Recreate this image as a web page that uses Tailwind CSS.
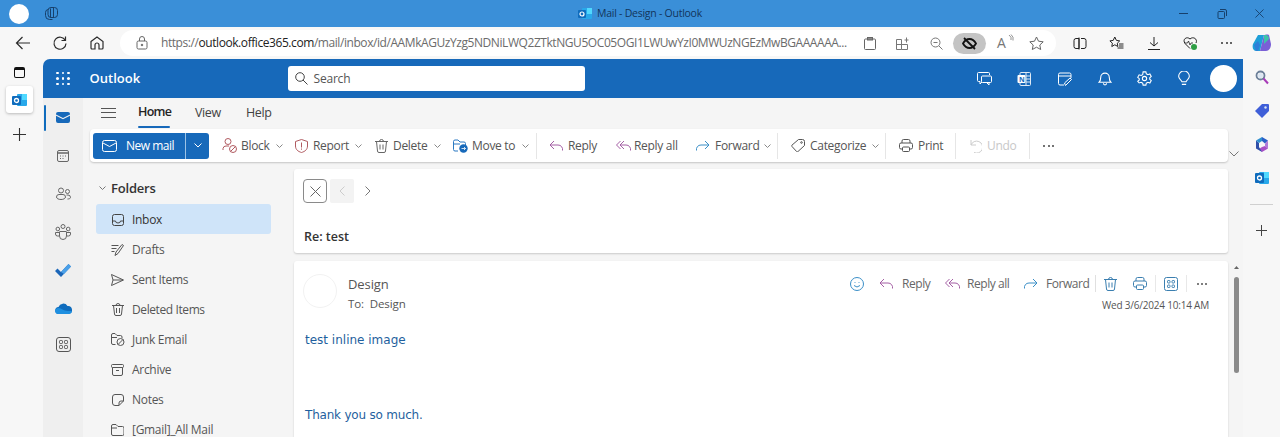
<!DOCTYPE html>
<html lang="en">
<head>
<meta charset="UTF-8">
<title>Mail - Design - Outlook</title>
<script src="https://cdn.jsdelivr.net/npm/@tailwindcss/browser@4"></script>
</head>
<body class="w-[1280px] h-[437px] overflow-hidden bg-[#f7f7f7] font-['Open_Sans','Noto_Sans',sans-serif] text-[#424242]">

<!-- title bar -->
<div class="h-[27px] bg-[#3a8fd8] flex items-center">
  <div class="w-5 h-5 rounded-full bg-white ml-[9px]"></div>
  <svg class="w-4 h-4 ml-[14px]" viewBox="0 0 16 16" fill="none" stroke="#17406b" stroke-width="1"><rect x="5" y="1.500" width="9.500" height="10" rx="3"/><path d="M5 3.500A3 3 0 0 0 2.500 6.500v3A4 4 0 0 0 6.500 13.500h3"/><path d="M7.500 2.500v9M10.500 2v10"/></svg>
  <div class="flex-1 flex items-center text-[10.500px] tracking-[-0.25px] text-[#12355c] gap-[5px] ml-[519px]">
    <svg class="w-[14px] h-[13px]" viewBox="0 0 14 13"><rect x="4" y="1" width="10" height="11" rx="1" fill="#28a8ea"/><rect x="9" y="1" width="5" height="6" fill="#50d9ff"/><rect x="0" y="3" width="8" height="8" rx="1" fill="#0f6cbd"/><circle cx="4" cy="7" r="2" fill="none" stroke="#fff" stroke-width="1.200"/></svg>
    <span>Mail - Design - Outlook</span>
  </div>
  <div class="flex items-center pr-[16px]">
    <div class="w-[9px] h-px bg-[#17406b]"></div>
    <svg class="w-[10px] h-[10px] ml-[29px]" viewBox="0 0 10 10" fill="none" stroke="#17406b"><rect x="1" y="2.500" width="6.500" height="7" rx="1"/><path d="M3 .5h5a1.500 1.500 0 0 1 1.500 1.500v5"/></svg>
    <svg class="w-[9px] h-[9px] ml-[28px]" viewBox="0 0 10 10" stroke="#17406b" stroke-width="1"><path d="M.5.500l9 9M9.500.5l-9 9"/></svg>
  </div>
</div>

<!-- browser toolbar -->
<div class="h-[32px] bg-[#f7f7f7] flex items-center">
  <svg class="w-4 h-4 ml-[15px]" viewBox="0 0 16 16" fill="none" stroke="#2b2b2b" stroke-width="1.200"><path d="M15 8H1.500M7.500 2 1.500 8l6 6"/></svg>
  <svg class="w-4 h-4 ml-[21px]" viewBox="0 0 16 16" fill="none" stroke="#2b2b2b" stroke-width="1.200"><path d="M13.500 1.500v4h-4M13.300 5.400A6 6 0 1 0 14 8.500"/></svg>
  <svg class="w-4 h-4 ml-[21px]" viewBox="0 0 16 16" fill="none" stroke="#2b2b2b" stroke-width="1.200"><path d="M2 6.500 8 2l6 4.500V13a1 1 0 0 1-1 1h-3V10a2 2 0 0 0-4 0v4H3a1 1 0 0 1-1-1z"/></svg>
  <div class="ml-[15px] w-[936px] h-[26px] rounded-full bg-white flex items-center">
    <svg class="w-[12px] h-[14px] ml-[16px]" viewBox="0 0 12 14" fill="none" stroke="#666" stroke-width="1"><rect x="1" y="5" width="10" height="8" rx="1.500"/><path d="M3.500 5V3a2.500 2.500 0 0 1 5 0v2"/><circle cx="6" cy="9" r=".8" fill="#666"/></svg>
    <div class="ml-[13px] w-[690px] text-[12px] leading-[16px] whitespace-nowrap text-[#6b6b6b] tracking-[-0.43px]">https://<span class="text-[#222]">outlook.office365.com</span>/mail/inbox/id/AAMkAGUzYzg5NDNiLWQ2ZTktNGU5OC05OGI1LWUwYzI0MWUzNGEzMwBGAAAAAA...</div>
    <svg class="w-[12px] h-[13px] ml-[13px]" viewBox="0 0 12 13" fill="none" stroke="#666"><rect x=".5" y="2" width="11" height="10.500" rx="1"/><rect x="3.500" y=".5" width="5" height="2.500" fill="#888"/></svg>
    <svg class="w-[13px] h-[13px] ml-[20px]" viewBox="0 0 13 13" fill="none" stroke="#777"><path d="M.5 2.500h5v10h-5zM.5 7.500h11v5h-6M8.500 3h4M10.500 .5v5"/></svg>
    <svg class="w-[13px] h-[13px] ml-[21px]" viewBox="0 0 13 13" fill="none" stroke="#777"><circle cx="5.500" cy="5.500" r="4.500"/><path d="M9 9l3.500 3.500M3.500 5.500h4"/></svg>
    <div class="ml-[10px] w-[33px] h-[21px] rounded-full bg-[#c4c4c4] flex items-center justify-center">
      <svg class="w-[15px] h-[13px]" viewBox="0 0 15 13" fill="none" stroke="#111" stroke-width="1.800"><path d="M1 6.500C3 3 5 2 7.500 2s4.500 1 6.500 4.500C12 10 10 11 7.500 11S3 10 1 6.500z"/><path d="M2 1l11 11"/></svg>
    </div>
    <div class="ml-[11px] text-[14px] leading-none text-[#777] w-[18px] relative">A<svg class="w-[6px] h-[8px] absolute left-[11px] top-[-2px]" viewBox="0 0 6 8" fill="none" stroke="#777" stroke-width=".8"><path d="M1 1q3 2 2 5M3 .5q3 2.500 2 6"/></svg></div>
    <svg class="w-[15px] h-[14px] ml-[14px]" viewBox="0 0 15 14" fill="none" stroke="#666"><path d="M7.500 1l2 4.200 4.700.6-3.400 3.200.9 4.500-4.200-2.300-4.200 2.300.9-4.500L.8 5.800l4.700-.6z"/></svg>
  </div>
  <svg class="w-[14px] h-[13px] ml-[17px]" viewBox="0 0 14 13" fill="none" stroke="#222"><path d="M6 1.500H3a2 2 0 0 0-2 2v6a2 2 0 0 0 2 2h3zM6 .5v12M8 1.500h3a2 2 0 0 1 2 2v6a2 2 0 0 1-2 2H8"/></svg>
  <svg class="w-[15px] h-[14px] ml-[22px]" viewBox="0 0 15 14" fill="none" stroke="#222"><path d="M5.800 1l1.600 3.400 3.300.5-2.400 2.300.6 3.300-3.100-1.700-3 1.700.6-3.300L.9 4.900l3.300-.5zM10 8h4.500M10 10h4.500M8.500 12h6"/></svg>
  <svg class="w-[12px] h-[14px] ml-[24px]" viewBox="0 0 12 14" fill="none" stroke="#222"><path d="M6 1v9M2 6.500 6 10l4-3.500M0 13.500h12"/></svg>
  <svg class="w-[15px] h-[15px] ml-[23px]" viewBox="0 0 15 15" fill="none"><path d="M7 12.500 2 7.500C-1 3 4 0 7 3c3-3 8 0 6 4" stroke="#222"/><path d="M2 7h2.500l1-2 1.500 4 1-2h2" stroke="#222" stroke-width=".8"/><circle cx="11" cy="11" r="3" fill="#2e9e44"/></svg>
  <div class="flex gap-[2.500px] ml-[23px]"><i class="w-[2px] h-[2px] rounded-full bg-[#333]"></i><i class="w-[2px] h-[2px] rounded-full bg-[#333]"></i><i class="w-[2px] h-[2px] rounded-full bg-[#333]"></i></div>
  <svg class="w-5 h-5 ml-[20px]" viewBox="0 0 20 20"><path d="M6 2h6L8 18H4C1 18 0 14 1 11z" fill="#1e9fd8"/><path d="M8 18h6c3 0 5-3 5-7l-2-9c-2-1-4 0-5 0z" fill="#7a5fd6"/><path d="M12 2h2c2 0 3 2 3 4l-5 5z" fill="#3ec3a8"/><path d="M2 12l4-4 2 4-2 6H4z" fill="#2e7fd8"/></svg>
</div>

<div class="flex h-[378px]">
  <!-- edge vertical tabs -->
  <div class="w-[43px] shrink-0 flex flex-col items-center">
    <div class="mt-[8px] w-[11px] h-[11px] rounded-[2px] border-[1.500px] border-[#111] border-t-[3px] ml-[-4px]"></div>
    <div class="mt-[8px] w-[27px] h-[27px] ml-[-4px] rounded-[3px] bg-white shadow-[0_1px_3px_rgba(0,0,0,0.25)] flex items-center justify-center">
      <svg class="w-[15px] h-[14px]" viewBox="0 0 15 14"><rect x="5" y="1" width="10" height="12" rx="1" fill="#28a8ea"/><rect x="10" y="1" width="5" height="6" fill="#50d9ff"/><rect x="0" y="3" width="9" height="9" rx="1" fill="#0f6cbd"/><circle cx="4.500" cy="7.500" r="2" fill="none" stroke="#fff" stroke-width="1.300"/></svg>
    </div>
    <svg class="w-[13px] h-[13px] mt-[15px] ml-[-4px]" viewBox="0 0 13 13" stroke="#333" stroke-width="1.100"><path d="M6.500 0v13M0 6.500h13"/></svg>
  </div>

  <!-- outlook -->
  <div class="w-[1200px] shrink-0 bg-[#f5f5f5] flex flex-col overflow-hidden rounded-tl-[7px]">
    <div class="h-[39px] bg-[#1769ba] flex items-center shrink-0">
      <div class="grid grid-cols-3 gap-[3px] ml-[13px]">
        <i class="w-[2.500px] h-[2.500px] rounded-full bg-white"></i><i class="w-[2.500px] h-[2.500px] rounded-full bg-white"></i><i class="w-[2.500px] h-[2.500px] rounded-full bg-white"></i>
        <i class="w-[2.500px] h-[2.500px] rounded-full bg-white"></i><i class="w-[2.500px] h-[2.500px] rounded-full bg-white"></i><i class="w-[2.500px] h-[2.500px] rounded-full bg-white"></i>
        <i class="w-[2.500px] h-[2.500px] rounded-full bg-white"></i><i class="w-[2.500px] h-[2.500px] rounded-full bg-white"></i><i class="w-[2.500px] h-[2.500px] rounded-full bg-white"></i>
      </div>
      <div class="ml-[20px] w-[198px] text-white text-[13px] font-semibold pt-[1px]">Outlook</div>
      <div class="w-[297px] h-[25px] bg-white rounded-[3px] flex items-center text-[12px] tracking-[-0.2px] text-[#555]">
        <svg class="w-[13px] h-[13px] ml-[7px]" viewBox="0 0 13 13" fill="none" stroke="#444"><circle cx="5" cy="5" r="4.300"/><path d="M8 8l4.500 4.500"/></svg>
        <span class="ml-[6px]">Search</span>
      </div>
      <svg class="w-[15px] h-[14px] ml-[392px]" viewBox="0 0 15 14" fill="none" stroke="#fff"><path d="M12.500 3V1.500a1 1 0 0 0-1-1h-10a1 1 0 0 0-1 1v7a1 1 0 0 0 1 1H3V12l2-2"/><rect x="4.500" y="4" width="10" height="6.500" rx="1"/><path d="M12 10.500V13l-2.500-2.500"/></svg>
      <svg class="w-[14px] h-[14px] ml-[25px]" viewBox="0 0 14 14"><rect x="3" y=".5" width="10.500" height="13" rx="1" fill="none" stroke="#dfeaf5"/><path d="M9 .5v13M9 4h4.500M9 7h4.500M9 10h4.500" stroke="#dfeaf5"/><rect x=".5" y="3" width="8" height="8" rx="1" fill="#fff"/><text x="2" y="9.700" font-size="7" font-weight="700" fill="#1769ba">N</text></svg>
      <svg class="w-[14px] h-[14px] ml-[27px]" viewBox="0 0 14 14" fill="none" stroke="#fff"><path d="M6 13H2a1.500 1.500 0 0 1-1.500-1.500v-9A1.500 1.500 0 0 1 2 1h9.500A1.500 1.500 0 0 1 13 2.500V6M.5 4H13"/><path d="M6.500 11l1 2.500 6-6-1.500-1.500-5.500 5z"/></svg>
      <svg class="w-[14px] h-[15px] ml-[26px]" viewBox="0 0 13 14" fill="none" stroke="#fff"><path d="M1 10.500c1-1 1.500-2 1.500-4.500a4 4 0 0 1 8 0c0 2.500.5 3.500 1.500 4.500zM5 11.500a1.500 1.500 0 0 0 3 0"/></svg>
      <svg class="w-[15px] h-[15px] ml-[25px]" viewBox="0 0 14 14" fill="none" stroke="#fff"><path d="M5.700.8h2.600l.4 1.800 1.500.8 1.800-.6 1.300 2.300-1.400 1.300v1.200l1.400 1.300-1.300 2.300-1.800-.6-1.500.8-.4 1.800H5.700l-.4-1.800-1.500-.8-1.800.6L.7 9.700l1.400-1.300V7.200L.7 5.900 2 3.600l1.800.6 1.500-.8z"/><circle cx="7" cy="7" r="2"/></svg>
      <svg class="w-[12px] h-[15px] ml-[26px]" viewBox="0 0 11 14" fill="none" stroke="#fff"><path d="M3.500 10C3 8 .5 7.500.5 5a5 5 0 0 1 10 0C10.500 7.500 8 8 7.500 10zM3.500 12.500h4"/></svg>
      <div class="w-[27px] h-[27px] rounded-full bg-white ml-[20px]"></div>
    </div>

    <div class="flex flex-1 min-h-0">
      <!-- app rail -->
      <div class="w-[40px] shrink-0 bg-[#efefef] flex flex-col items-center relative">
        <div class="absolute left-[1px] top-[7px] h-[26px] w-[2px] bg-[#0f6cbd] rounded"></div>
        <svg class="w-[14px] h-[11px] mt-[14px]" viewBox="0 0 14 11"><path d="M0 2a2 2 0 0 1 2-2h10a2 2 0 0 1 2 2v.500L7 6 0 2.500z" fill="#1769ba"/><path d="M0 3.800 7 7.300l7-3.500V9a2 2 0 0 1-2 2H2a2 2 0 0 1-2-2z" fill="#1769ba"/></svg>
        <svg class="w-[12px] h-[12px] mt-[27px]" viewBox="0 0 12 12" fill="none" stroke="#666"><rect x=".5" y=".5" width="11" height="11" rx="1.500"/><path d="M.5 3h11" stroke-width="1.500"/><path d="M3 6h1M5.500 6h1M8 6h1M3 8.500h1M5.500 8.500h1" stroke-width="1"/></svg>
        <svg class="w-[15px] h-[13px] mt-[25px]" viewBox="0 0 15 13" fill="none" stroke="#666"><circle cx="5" cy="3.500" r="2.500"/><circle cx="11.500" cy="4.500" r="2"/><path d="M.5 10a2.500 2.500 0 0 1 2.500-2.500h4a2.500 2.500 0 0 1 2.500 2.500c0 1.500-2 2.500-4.500 2.500S.5 11.500.5 10zM10.500 8H12a2.500 2.500 0 0 1 2.500 2.500c0 1-1.500 1.500-3 1.500"/></svg>
        <svg class="w-[16px] h-[16px] mt-[24px]" viewBox="0 0 16 16" fill="none" stroke="#666"><circle cx="8" cy="2.500" r="2"/><circle cx="2.800" cy="5" r="1.800"/><circle cx="13.200" cy="5" r="1.800"/><path d="M5 7.500h6a.5.5 0 0 1 .5.5v4a3.500 3.500 0 0 1-7 0V8a.5.5 0 0 1 .5-.5zM4 12H2.500A2 2 0 0 1 .5 10V8.500h3.500M12 12h1.500a2 2 0 0 0 2-2V8.500H12"/></svg>
        <svg class="w-[16px] h-[13px] mt-[24px]" viewBox="0 0 16 13"><path d="M0 7l2.500-2.500L6 8l7.500-8L16 2.500 6 13z" fill="#1b66b8"/><path d="M6 8l7.500-8L16 2.500 9 10z" fill="#4aa0e8"/></svg>
        <svg class="w-[17px] h-[11px] mt-[26px]" viewBox="0 0 17 11"><path d="M4 11a3.500 3.500 0 0 1-.5-7A5 5 0 0 1 12.500 3 4 4 0 0 1 13.500 11z" fill="#0f6cbd"/><path d="M0 8a3.500 3.500 0 0 1 3.500-3c3 0 5 3 9 3H17a3.500 3.500 0 0 1-3.500 3H4A3.500 3.500 0 0 1 0 8z" fill="#1e8fe0"/></svg>
        <svg class="w-[15px] h-[15px] mt-[23px]" viewBox="0 0 15 15" fill="none" stroke="#555"><rect x=".5" y=".5" width="14" height="14" rx="2.500"/><rect x="3.500" y="3.500" width="3" height="3" rx=".8"/><rect x="8.500" y="3.500" width="3" height="3" rx=".8"/><rect x="3.500" y="8.500" width="3" height="3" rx=".8"/><rect x="8.500" y="8.500" width="3" height="3" rx=".8"/></svg>
      </div>

      <div class="flex-1 min-w-0 flex flex-col">
        <!-- tabs -->
        <div class="h-[31px] shrink-0 flex items-center text-[12.500px] tracking-[-0.4px] text-[#424242]">
          <div class="w-[15px] h-[10px] ml-[18px] border-y border-[#555] relative mb-[2px]"><div class="absolute top-[3.500px] left-0 w-full h-px bg-[#555]"></div></div>
          <div class="ml-[22px] w-[32px] h-[29px] flex items-center relative font-semibold text-[#242424] tracking-[-0.7px] mb-[2px]">Home<div class="absolute bottom-[-1px] left-0 w-full h-[2px] rounded bg-[#1769ba]"></div></div>
          <div class="ml-[25px] w-[25px]">View</div>
          <div class="ml-[26px]">Help</div>
        </div>

        <!-- ribbon -->
        <div class="ml-[7px] w-[1138px] h-[33px] shrink-0 bg-white rounded-[4px] shadow-[0_1px_2px_rgba(0,0,0,0.2)] flex items-center text-[12px] tracking-[-0.3px] text-[#555] whitespace-nowrap relative">
          <div class="ml-[3px] w-[116px] h-[26px] bg-[#1769ba] rounded-[3px] flex items-center text-white">
            <svg class="w-[15px] h-[12px] ml-[9px]" viewBox="0 0 15 12" fill="none" stroke="#fff"><rect x=".5" y=".5" width="14" height="11" rx="2"/><path d="M1 3l6.500 3.500L14 3"/></svg>
            <span class="ml-[9px] w-[58px] tracking-[-0.5px]">New mail</span>
            <div class="w-px h-[26px] bg-[#9cc3e6] ml-[1px]"></div>
            <svg class="w-[8px] h-[5px] ml-[8px]" viewBox="0 0 8 5" fill="none" stroke="#fff"><path d="M.5.500 4 4 7.500.5"/></svg>
          </div>
          <svg class="w-[15px] h-[15px] ml-[13px]" viewBox="0 0 15 15" fill="none" stroke="#b05a60"><circle cx="6" cy="3.500" r="3"/><path d="M1 12v-1.500A3 3 0 0 1 4 8h3"/><circle cx="11" cy="11" r="3.500"/><path d="M8.500 13.500l5-5"/></svg>
          <span class="ml-[4px] w-[27px]">Block</span>
          <svg class="w-[7px] h-[4px] ml-[8px]" viewBox="0 0 7 4" fill="none" stroke="#888"><path d="M.5.500 3.500 3.500 6.500.5"/></svg>
          <svg class="w-[13px] h-[14px] ml-[12px]" viewBox="0 0 13 14" fill="none" stroke="#b05a60"><path d="M6.500.5 12.500 2.500V7c0 3.500-2.500 5.500-6 6.500C3 12.500.5 10.500.5 7V2.500z"/><path d="M6.500 3.500v5M6.500 9.500v1.200"/></svg>
          <span class="ml-[5px] w-[35px]">Report</span>
          <svg class="w-[7px] h-[4px] ml-[7px]" viewBox="0 0 7 4" fill="none" stroke="#888"><path d="M.5.500 3.500 3.500 6.500.5"/></svg>
          <svg class="w-[13px] h-[14px] ml-[13px]" viewBox="0 0 13 14" fill="none" stroke="#666"><path d="M0 2.500h13M4.500 2.500a2 2 0 0 1 4 0M1.500 2.500l1 9.500a1.500 1.500 0 0 0 1.500 1.500h5a1.500 1.500 0 0 0 1.500-1.500l1-9.500M5 5.500v5M8 5.500v5"/></svg>
          <span class="ml-[5px] w-[34px]">Delete</span>
          <svg class="w-[7px] h-[4px] ml-[7px]" viewBox="0 0 7 4" fill="none" stroke="#888"><path d="M.5.500 3.500 3.500 6.500.5"/></svg>
          <svg class="w-[15px] h-[14px] ml-[12px]" viewBox="0 0 15 14"><path d="M5 12H2a1.500 1.500 0 0 1-1.500-1.500v-8A1.500 1.500 0 0 1 2 1h3l2 2h4a1.500 1.500 0 0 1 1.500 1.500V6M.5 5H7" fill="none" stroke="#2b79c2"/><circle cx="10.500" cy="9.500" r="4.200" fill="#1769ba"/><path d="M8.500 9.500h4M11 8l1.500 1.500L11 11" stroke="#fff" fill="none" stroke-width=".8"/></svg>
          <span class="ml-[4px] w-[43px]">Move to</span>
          <svg class="w-[7px] h-[4px] ml-[7px]" viewBox="0 0 7 4" fill="none" stroke="#888"><path d="M.5.500 3.500 3.500 6.500.5"/></svg>
          <div class="w-px h-[26px] bg-[#e6e6e6] ml-[7px]"></div>
          <svg class="w-[14px] h-[11px] ml-[12px]" viewBox="0 0 14 11" fill="none" stroke="#a45fa4"><path d="M5 1 1 5l4 4M1 5h8a4.500 4.500 0 0 1 4.500 5.500"/></svg>
          <span class="ml-[5px] w-[28px]">Reply</span>
          <svg class="w-[15px] h-[11px] ml-[20px]" viewBox="0 0 15 11" fill="none" stroke="#a45fa4"><path d="M4.500 1 .5 5l4 4M8 1 4 5l4 4M4 5h6a4.500 4.500 0 0 1 4.500 5.500"/></svg>
          <span class="ml-[3px] w-[43px]">Reply all</span>
          <svg class="w-[14px] h-[11px] ml-[19px]" viewBox="0 0 14 11" fill="none" stroke="#3b8fc7"><path d="M9 1l4 4-4 4M13 5H5A4.500 4.500 0 0 0 .5 10.500"/></svg>
          <span class="ml-[5px] w-[42px]">Forward</span>
          <svg class="w-[7px] h-[4px] ml-[7px]" viewBox="0 0 7 4" fill="none" stroke="#888"><path d="M.5.500 3.500 3.500 6.500.5"/></svg>
          <div class="w-px h-[26px] bg-[#e6e6e6] ml-[6px]"></div>
          <svg class="w-[14px] h-[13px] ml-[13px]" viewBox="0 0 14 13" fill="none" stroke="#555"><path d="M7.500.5h4a2 2 0 0 1 2 2v4L7 12.500a1 1 0 0 1-1.400 0L1 7.500a1 1 0 0 1 0-1.400z"/><circle cx="10.500" cy="3.500" r=".8"/></svg>
          <span class="ml-[5px] w-[55px]">Categorize</span>
          <svg class="w-[7px] h-[4px] ml-[7px]" viewBox="0 0 7 4" fill="none" stroke="#888"><path d="M.5.500 3.500 3.500 6.500.5"/></svg>
          <div class="w-px h-[26px] bg-[#e6e6e6] ml-[6px]"></div>
          <svg class="w-[14px] h-[13px] ml-[13px]" viewBox="0 0 14 13" fill="none" stroke="#555"><path d="M3 4V2a1.500 1.500 0 0 1 1.500-1.500h5A1.500 1.500 0 0 1 11 2v2M3 10H2a1.500 1.500 0 0 1-1.500-1.500V5.500A1.500 1.500 0 0 1 2 4h10a1.500 1.500 0 0 1 1.500 1.500v3A1.500 1.500 0 0 1 12 10h-1"/><rect x="3.500" y="8" width="7" height="4.500" rx="1"/></svg>
          <span class="ml-[5px] w-[24px]">Print</span>
          <div class="w-px h-[26px] bg-[#e6e6e6] ml-[13px]"></div>
          <svg class="w-[12px] h-[14px] ml-[14px]" viewBox="0 0 12 14" fill="none" stroke="#ccc"><path d="M1 1v5h5M1 6a6 6 0 1 1 3 7.500"/></svg>
          <span class="ml-[5px] w-[28px] text-[#c8c8c8]">Undo</span>
          <div class="w-px h-[26px] bg-[#e6e6e6] ml-[14px]"></div>
          <div class="flex gap-[2.500px] ml-[13px]"><i class="w-[2px] h-[2px] rounded-full bg-[#444]"></i><i class="w-[2px] h-[2px] rounded-full bg-[#444]"></i><i class="w-[2px] h-[2px] rounded-full bg-[#444]"></i></div>
          <svg class="absolute left-[1139px] top-[22px] w-[10px] h-[6px]" viewBox="0 0 10 6" fill="none" stroke="#777"><path d="M.5.500 5 5 9.500.5"/></svg>
        </div>

        <div class="flex flex-1 min-h-0">
          <!-- folders -->
          <div class="w-[211px] shrink-0 text-[12px] tracking-[-0.3px] leading-[16px] text-[#555] whitespace-nowrap overflow-hidden">
            <div class="h-[42px] flex items-center pt-[10px]">
              <svg class="w-[7px] h-[4px] ml-[16px]" viewBox="0 0 7 4" fill="none" stroke="#777"><path d="M.5.500 3.500 3.500 6.500.5"/></svg>
              <span class="ml-[5px] text-[13px] font-semibold text-[#333] tracking-[-0.2px]">Folders</span>
            </div>
            <div class="ml-[13px] w-[175px] h-[30px] rounded-[3px] bg-[#cfe4f9] flex items-center text-[#333] font-medium pt-[1px]">
              <svg class="w-3 h-3 ml-[16px]" viewBox="0 0 12 12" fill="none" stroke="#444"><rect x=".5" y=".5" width="11" height="11" rx="2"/><path d="M.5 7H3.500a2.500 2 0 0 0 5 0h3"/></svg>
              <span class="ml-[8px]">Inbox</span>
            </div>
            <div class="ml-[13px] h-[30px] flex items-center pt-[1px]">
              <svg class="w-[13px] h-[13px] ml-[15px]" viewBox="0 0 13 13" fill="none" stroke="#555"><path d="M.5 2.500h7M.5 5.500h5M.5 8.500h3M4 12.500 5 9l6-7.500 1.500 1L7 10.500z"/></svg>
              <span class="ml-[8px]">Drafts</span>
            </div>
            <div class="ml-[13px] h-[30px] flex items-center pt-[1px]">
              <svg class="w-[13px] h-[12px] ml-[15px]" viewBox="0 0 13 12" fill="none" stroke="#555"><path d="M.5.500 12.500 6 .5 11.500 2 6zM2 6h10"/></svg>
              <span class="ml-[8px]">Sent Items</span>
            </div>
            <div class="ml-[13px] h-[30px] flex items-center pt-[1px]">
              <svg class="w-3 h-[13px] ml-[16px]" viewBox="0 0 12 13" fill="none" stroke="#555"><path d="M0 2.500h12M4 2.500a2 2 0 0 1 4 0M1.500 2.500l1 8.500a1.500 1.500 0 0 0 1.500 1.500h4A1.500 1.500 0 0 0 9.500 11l1-8.500M4.500 5v5M7.500 5v5"/></svg>
              <span class="ml-[8px] tracking-[-0.4px]">Deleted Items</span>
            </div>
            <div class="ml-[13px] h-[30px] flex items-center pt-[1px]">
              <svg class="w-[14px] h-[13px] ml-[15px]" viewBox="0 0 14 13" fill="none" stroke="#555"><path d="M4.500 11.500H2A1.500 1.500 0 0 1 .5 10V2A1.500 1.500 0 0 1 2 .5h2l2 2h3.500A1.500 1.500 0 0 1 11 4v1M.5 4.500H6"/><circle cx="9.500" cy="9" r="3.500"/><path d="M7 11.500l5-5"/></svg>
              <span class="ml-[7px]">Junk Email</span>
            </div>
            <div class="ml-[13px] h-[30px] flex items-center pt-[1px]">
              <svg class="w-[13px] h-[12px] ml-[15px]" viewBox="0 0 13 12" fill="none" stroke="#555"><rect x=".5" y=".5" width="12" height="3" rx="1"/><path d="M1.500 3.500V10A1.500 1.500 0 0 0 3 11.500h7a1.500 1.500 0 0 0 1.500-1.500V3.500M5 6.500h3"/></svg>
              <span class="ml-[8px]">Archive</span>
            </div>
            <div class="ml-[13px] h-[30px] flex items-center pt-[1px]">
              <svg class="w-3 h-3 ml-[16px]" viewBox="0 0 12 12" fill="none" stroke="#555"><path d="M7 11.500H3A2.500 2.500 0 0 1 .5 9V3A2.500 2.500 0 0 1 3 .5h6A2.500 2.500 0 0 1 11.500 3v4zM7 11.500V9a2 2 0 0 1 2-2h2.500"/></svg>
              <span class="ml-[8px]">Notes</span>
            </div>
            <div class="ml-[13px] h-[30px] flex items-center pt-[1px]">
              <svg class="w-[13px] h-[12px] ml-[15px]" viewBox="0 0 13 12" fill="none" stroke="#555"><path d="M.5 2A1.500 1.500 0 0 1 2 .5h3l2 2h4.500A1.500 1.500 0 0 1 13 4v6a1.500 1.500 0 0 1-1.500 1.500H2A1.500 1.500 0 0 1 .5 10zM.5 4H6"/></svg>
              <span class="ml-[8px]">[Gmail]_All Mail</span>
            </div>
          </div>

          <!-- reading pane -->
          <div class="w-[934px] shrink-0 pt-[7px] flex flex-col gap-[8px]">
            <div class="h-[84px] shrink-0 bg-white rounded-[3px] shadow-[0_1px_2px_rgba(0,0,0,0.18)] flex flex-col">
              <div class="flex items-center mt-[10px] ml-[9px]">
                <div class="w-[24px] h-[24px] rounded-[4px] border border-[#8a8a8a] flex items-center justify-center">
                  <svg class="w-[11px] h-[11px]" viewBox="0 0 11 11" stroke="#666"><path d="M.5.500l10 10M10.500.5l-10 10"/></svg>
                </div>
                <div class="w-[24px] h-[24px] bg-[#f3f3f3] rounded-[2px] ml-[3px] flex items-center justify-center">
                  <svg class="w-[6px] h-[10px]" viewBox="0 0 6 10" fill="none" stroke="#ccc"><path d="M5.500.5 1 5l4.500 4.500"/></svg>
                </div>
                <svg class="w-[6px] h-[10px] ml-[11px]" viewBox="0 0 6 10" fill="none" stroke="#777"><path d="M.5.500 5 5 .5 9.500"/></svg>
              </div>
              <div class="mt-[25px] ml-[10px] text-[12.500px] font-semibold text-[#333] leading-[17px]">Re: test</div>
            </div>

            <div class="flex-1 bg-white rounded-t-[3px] shadow-[0_1px_2px_rgba(0,0,0,0.18)] relative">
              <div class="flex">
                <div class="w-[34px] h-[34px] rounded-full border border-[#f2f2f2] ml-[9px] mt-[13px] shrink-0"></div>
                <div class="ml-[11px] mt-[14px]">
                  <div class="text-[13px] tracking-[-0.1px] text-[#555] leading-[18px]">Design</div>
                  <div class="text-[11.500px] tracking-[-0.1px] text-[#555] leading-[17px] mt-[2px]">To:&nbsp; Design</div>
                </div>
                <div class="ml-auto mr-[19px] mt-[14px] flex flex-col items-end">
                  <div class="flex items-center h-[17px] text-[12px] tracking-[-0.45px] text-[#666] whitespace-nowrap">
                    <svg class="w-[14px] h-[14px]" viewBox="0 0 14 14" fill="none" stroke="#3b8fc7"><circle cx="7" cy="7" r="6.500"/><path d="M4 8.500q3 3 6 0M5 5v.8M9 5v.8"/></svg>
                    <svg class="w-[14px] h-[11px] ml-[15px]" viewBox="0 0 14 11" fill="none" stroke="#a45fa4"><path d="M5 1 1 5l4 4M1 5h8a4.500 4.500 0 0 1 4.500 5.500"/></svg>
                    <span class="ml-[9px] w-[28px]">Reply</span>
                    <svg class="w-[15px] h-[11px] ml-[15px]" viewBox="0 0 15 11" fill="none" stroke="#a45fa4"><path d="M4.500 1 .5 5l4 4M8 1 4 5l4 4M4 5h6a4.500 4.500 0 0 1 4.500 5.500"/></svg>
                    <span class="ml-[7px] w-[42px]">Reply all</span>
                    <svg class="w-[14px] h-[11px] ml-[15px]" viewBox="0 0 14 11" fill="none" stroke="#3b8fc7"><path d="M9 1l4 4-4 4M13 5H5A4.500 4.500 0 0 0 .5 10.500"/></svg>
                    <span class="ml-[8px] w-[42px]">Forward</span>
                    <div class="w-px h-[17px] bg-[#e0e0e0] ml-[7px]"></div>
                    <svg class="w-[13px] h-[14px] ml-[8px]" viewBox="0 0 13 14" fill="none" stroke="#3b7fb0"><path d="M0 2.500h13M4.500 2.500a2 2 0 0 1 4 0M1.500 2.500l1 9.500a1.500 1.500 0 0 0 1.500 1.500h5a1.500 1.500 0 0 0 1.500-1.500l1-9.500M5 5.500v5M8 5.500v5"/></svg>
                    <svg class="w-[14px] h-[13px] ml-[16px]" viewBox="0 0 14 13" fill="none" stroke="#3b7fb0"><path d="M3 4V2a1.500 1.500 0 0 1 1.500-1.500h5A1.500 1.500 0 0 1 11 2v2M3 10H2a1.500 1.500 0 0 1-1.500-1.500V5.500A1.500 1.500 0 0 1 2 4h10a1.500 1.500 0 0 1 1.500 1.500v3A1.500 1.500 0 0 1 12 10h-1"/><rect x="3.500" y="8" width="7" height="4.500" rx="1"/></svg>
                    <div class="w-px h-[17px] bg-[#e8e8e8] ml-[8px]"></div>
                    <svg class="w-[14px] h-[14px] ml-[8px]" viewBox="0 0 14 14" fill="none" stroke="#3b7fb0"><rect x=".5" y=".5" width="13" height="13" rx="2"/><rect x="3.500" y="3.500" width="2.500" height="2.500" rx=".7"/><rect x="8" y="3.500" width="2.500" height="2.500" rx=".7"/><rect x="3.500" y="8" width="2.500" height="2.500" rx=".7"/><rect x="8" y="8" width="2.500" height="2.500" rx=".7"/></svg>
                    <div class="w-px h-[17px] bg-[#e8e8e8] ml-[8px]"></div>
                    <div class="flex gap-[2px] ml-[10px] mr-[2px]"><i class="w-[2px] h-[2px] rounded-full bg-[#555]"></i><i class="w-[2px] h-[2px] rounded-full bg-[#555]"></i><i class="w-[2px] h-[2px] rounded-full bg-[#555]"></i></div>
                  </div>
                  <div class="text-[10px] tracking-[-0.2px] text-[#555] leading-[14px] mt-[6px]">Wed 3/6/2024 10:14 AM</div>
                </div>
              </div>
              <div class="ml-[11px] mt-[19px] font-['Comic_Sans_MS','DejaVu_Sans',cursive] text-[12px] text-[#1f5f9e] leading-[18px]">
                <div>test inline image</div>
                <div class="mt-[57px] tracking-[-0.2px]">Thank you so much.</div>
              </div>
            </div>
          </div>

          <!-- scrollbar -->
          <div class="w-[15px] shrink-0 pt-[104px] pl-[1px] flex flex-col items-center">
            <svg class="w-[5px] h-[3px]" viewBox="0 0 5 3"><path d="M0 3l2.500-3L5 3z" fill="#666"/></svg>
            <div class="w-[5px] h-[96px] mt-[8px] rounded-full bg-[#8a8a8a]"></div>
          </div>
        </div>
      </div>
    </div>
  </div>

  <!-- edge right sidebar -->
  <div class="w-[37px] shrink-0 flex flex-col items-center">
    <svg class="w-[14px] h-[15px] mt-[11px]" viewBox="0 0 14 15" fill="none"><circle cx="5.500" cy="5.500" r="4" stroke="#6b7f99" stroke-width="1.800"/><circle cx="5.500" cy="5.500" r="2.500" fill="#dbe6f2"/><path d="M8.500 8.500l4.500 5" stroke="#a83bb8" stroke-width="2"/></svg>
    <svg class="w-[14px] h-[14px] mt-[19px]" viewBox="0 0 14 14"><path d="M7 0h6a1 1 0 0 1 1 1v6l-7 7-7-7z" fill="#3f5fd8"/><circle cx="10.500" cy="3.500" r="1.200" fill="#dbe6f2"/></svg>
    <svg class="w-[14px] h-[15px] mt-[19px]" viewBox="0 0 14 15"><path d="M7 0l6 3.500-3 3L7 4z" fill="#2b5fc7"/><path d="M13 3.500v8L10 9V6.500z" fill="#b07ad8"/><path d="M13 11.500 7 15l-3-3 3-2 3-1z" fill="#a84fc7"/><path d="M7 15 1 11.500v-8L4 6v4z" fill="#2f4fa8"/><path d="M1 3.500 7 0v4L4 6z" fill="#2f8fd0"/></svg>
    <svg class="w-[14px] h-[14px] mt-[19px]" viewBox="0 0 14 14"><rect x="4" y="1" width="10" height="12" rx="1" fill="#28a8ea"/><rect x="9" y="1" width="5" height="6" fill="#50d9ff"/><rect x="0" y="2" width="9" height="10" rx="1" fill="#0f6cbd"/><circle cx="4.500" cy="7" r="2" fill="none" stroke="#fff" stroke-width="1.300"/></svg>
    <div class="w-[23px] h-px bg-[#d0d0d0] mt-[19px]"></div>
    <svg class="w-[11px] h-[11px] mt-[20px]" viewBox="0 0 11 11" stroke="#444"><path d="M5.500 0v11M0 5.500h11"/></svg>
  </div>
</div>
</body>
</html>
